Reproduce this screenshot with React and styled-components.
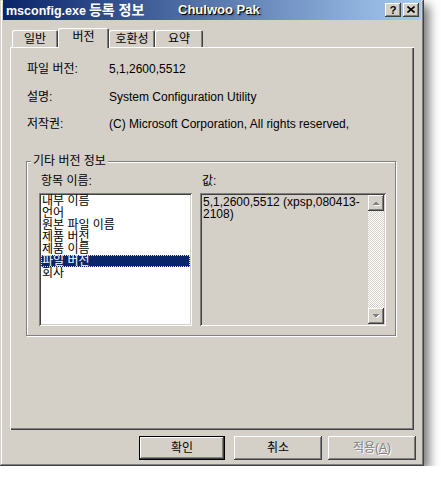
import React from 'react';
import styled, { createGlobalStyle } from 'styled-components';

const FONT = `"Liberation Sans", "Noto Sans CJK KR", sans-serif`;

const Global = createGlobalStyle`
  html, body { margin: 0; padding: 0; background: #fff; }
  body { font-family: ${FONT}; font-size: 12px; color: #000; }
  * { box-sizing: border-box; }
`;

const raised = `box-shadow: inset -1px -1px #404040, inset 1px 1px #fff, inset -2px -2px #808080, inset 2px 2px #d4d0c8;`;
const sunken = `box-shadow: inset 1px 1px #808080, inset -1px -1px #fff, inset 2px 2px #404040, inset -2px -2px #d4d0c8;`;

const Window = styled.div`
  position: relative;
  width: 424px;
  height: 466px;
  background: #d4d0c8;
  padding: 0 3px 3px;
  display: flex;
  flex-direction: column;
  box-shadow: inset -1px -1px #404040, inset 1px 1px #d4d0c8, inset -2px -2px #808080,
    inset 2px 2px #fff, 5px 5px 10px rgba(0, 0, 0, 0.55);
`;

const TitleBar = styled.div`
  height: 20px;
  flex: none;
  display: flex;
  align-items: center;
  padding: 0 2px 0 3px;
  gap: 2px;
  background: linear-gradient(to right, #0a246a, #a6caf0);
`;

const TitleText = styled.div`
  flex: 1;
  color: #fff;
  font-weight: bold;
  font-size: 12.5px;
  line-height: 16px;
  white-space: nowrap;
`;

const TitleHangul = styled.span`
  font-size: 14px;
  margin-left: 3px;
`;

const Watermark = styled.div`
  position: absolute;
  left: 178px;
  top: 2px;
  font-family: "Liberation Sans", sans-serif;
  font-weight: bold;
  font-size: 13px;
  line-height: 16px;
  color: #fffbe4;
  text-shadow: 1px 1px 0 #000, 2px 2px 2px rgba(60, 60, 60, 0.5);
  pointer-events: none;
`;

const CaptionButton = styled.div`
  width: 16px;
  height: 14px;
  flex: none;
  background: #d4d0c8;
  ${raised}
  display: flex;
  align-items: center;
  justify-content: center;
  font-family: "Liberation Sans", sans-serif;
  font-weight: bold;
  font-size: 11px;
  line-height: 12px;
  color: #000;
  padding-bottom: 1px;
`;

const Body = styled.div`
  flex: 1;
  display: flex;
  flex-direction: column;
  padding: 8px 5px 0 7px;
`;

const TabStrip = styled.div`
  display: flex;
  align-items: flex-end;
  height: 19px;
  padding-left: 2px;
  position: relative;
  z-index: 1;
`;

const Tab = styled.div`
  width: ${(p) => p.$w}px;
  height: ${(p) => (p.$active ? 20 : 17)}px;
  margin-bottom: ${(p) => (p.$active ? -1 : 0)}px;
  background: #d4d0c8;
  border-radius: 2px 2px 0 0;
  box-shadow: inset 1px 1px #fff, inset -1px 0 #404040, inset -2px 0 #808080;
  display: flex;
  align-items: center;
  justify-content: center;
  padding-bottom: ${(p) => (p.$active ? 3 : 0)}px;
  line-height: 14px;
  font-size: 12px;
`;

const Panel = styled.div`
  width: 404px;
  height: 383px;
  flex: none;
  box-shadow: inset 1px 1px #fff, inset -1px -1px #404040, inset -2px -2px #808080;
  padding: 15px 0 0 16px;
`;

const InfoGrid = styled.div`
  display: grid;
  grid-template-columns: 82px 1fr;
  grid-auto-rows: 14px;
  row-gap: 13.5px;
  line-height: 14px;
  padding-left: 1px;
  white-space: nowrap;
`;

const GroupBox = styled.div`
  position: relative;
  margin-top: 30px;
  width: 370px;
  height: 175px;
  border: 1px solid #808080;
  box-shadow: 1px 1px 0 #fff, inset 1px 1px 0 #fff;
  padding: 12px 0 0 12px;
  display: grid;
  grid-template-columns: 153px 186px;
  grid-template-rows: 14px 133px;
  column-gap: 8px;
  row-gap: 5px;
`;

const GroupLabel = styled.div`
  position: absolute;
  top: -8px;
  left: 4px;
  padding: 0 2px;
  background: #d4d0c8;
  line-height: 14px;
`;

const FieldLabel = styled.div`
  line-height: 14px;
  padding-left: 2px;
`;

const ListBox = styled.div`
  background: #fff;
  ${sunken}
  padding: 2px;
`;

const ListItem = styled.div`
  height: 12px;
  line-height: 12px;
  padding-left: 1px;
  white-space: nowrap;
  background: ${(p) => (p.$selected ? '#0a246a' : 'transparent')};
  color: ${(p) => (p.$selected ? '#fff' : '#000')};
  outline: ${(p) => (p.$selected ? '1px dotted #f2e4a8' : 'none')};
  outline-offset: -1px;
`;

const ValueBox = styled.div`
  background: #d4d0c8;
  ${sunken}
  padding: 2px;
  display: flex;
`;

const ValueText = styled.div`
  flex: 1;
  padding: 1px 0 0 1px;
  line-height: 12px;
  white-space: nowrap;
`;

const ScrollBar = styled.div`
  width: 16px;
  display: flex;
  flex-direction: column;
`;

const ScrollTrack = styled.div`
  flex: 1;
  background-color: #fff;
  background-image: conic-gradient(#d4d0c8 25%, transparent 0 50%, #d4d0c8 0 75%, transparent 0);
  background-size: 2px 2px;
`;

const ScrollButton = styled.div`
  width: 16px;
  height: 16px;
  background: #d4d0c8;
  ${raised}
  display: flex;
  align-items: center;
  justify-content: center;
`;

const ButtonRow = styled.div`
  display: flex;
  justify-content: flex-end;
  margin-top: 6px;
  height: 24px;
`;

const PushButton = styled.div`
  width: ${(p) => p.$w}px;
  margin-left: ${(p) => p.$ml}px;
  height: 24px;
  background: #d4d0c8;
  border: ${(p) => (p.$default ? '1px solid #000' : 'none')};
  ${raised}
  display: flex;
  align-items: center;
  justify-content: center;
  line-height: 14px;
  color: ${(p) => (p.$disabled ? '#808080' : '#000')};
  text-shadow: ${(p) => (p.$disabled ? '1px 1px 0 #fff' : 'none')};
`;

const Arrow = ({ down }) => (
  <svg width="16" height="16" viewBox="0 0 16 16" shapeRendering="crispEdges">
    {down ? (
      <>
        <polygon points="5,7 12,7 8.5,10.5" fill="#fff" />
        <polygon points="4,6 11,6 7.5,9.5" fill="#808080" />
      </>
    ) : (
      <>
        <polygon points="5,11 12,11 8.5,7.5" fill="#fff" />
        <polygon points="4,10 11,10 7.5,6.5" fill="#808080" />
      </>
    )}
  </svg>
);

const CloseGlyph = () => (
  <svg width="8" height="7" viewBox="0 0 8 7">
    <path d="M0.5 0.5 L7.5 6.5 M7.5 0.5 L0.5 6.5" stroke="#000" strokeWidth="1.6" fill="none" />
  </svg>
);

const tabs = [
  { label: '일반', w: 46 },
  { label: '버전', w: 51, active: true },
  { label: '호환성', w: 46 },
  { label: '요약', w: 48 },
];

const items = ['내부 이름', '언어', '원본 파일 이름', '제품 버전', '제품 이름', '파일 버전', '회사'];

export default function App() {
  return (
    <>
      <Global />
      <Window>
        <TitleBar>
          <TitleText>
            msconfig.exe<TitleHangul>등록 정보</TitleHangul>
          </TitleText>
          <CaptionButton>?</CaptionButton>
          <CaptionButton>
            <CloseGlyph />
          </CaptionButton>
        </TitleBar>
        <Watermark>Chulwoo Pak</Watermark>
        <Body>
          <TabStrip>
            {tabs.map((t) => (
              <Tab key={t.label} $w={t.w} $active={t.active}>
                {t.label}
              </Tab>
            ))}
          </TabStrip>
          <Panel>
            <InfoGrid>
              <div>파일 버전:</div>
              <div>5,1,2600,5512</div>
              <div>설명:</div>
              <div>System Configuration Utility</div>
              <div>저작권:</div>
              <div>(C) Microsoft Corporation, All rights reserved,</div>
            </InfoGrid>
            <GroupBox>
              <GroupLabel>기타 버전 정보</GroupLabel>
              <FieldLabel>항목 이름:</FieldLabel>
              <FieldLabel>값:</FieldLabel>
              <ListBox>
                {items.map((it, i) => (
                  <ListItem key={it} $selected={i === 5}>
                    {it}
                  </ListItem>
                ))}
              </ListBox>
              <ValueBox>
                <ValueText>
                  5,1,2600,5512 (xpsp,080413-
                  <br />
                  2108)
                </ValueText>
                <ScrollBar>
                  <ScrollButton>
                    <Arrow />
                  </ScrollButton>
                  <ScrollTrack />
                  <ScrollButton>
                    <Arrow down />
                  </ScrollButton>
                </ScrollBar>
              </ValueBox>
            </GroupBox>
          </Panel>
          <ButtonRow>
            <PushButton $w={86} $ml={0} $default>
              확인
            </PushButton>
            <PushButton $w={88} $ml={9}>
              취소
            </PushButton>
            <PushButton $w={88} $ml={6} $disabled>
              적용(<u>A</u>)
            </PushButton>
          </ButtonRow>
        </Body>
      </Window>
    </>
  );
}
